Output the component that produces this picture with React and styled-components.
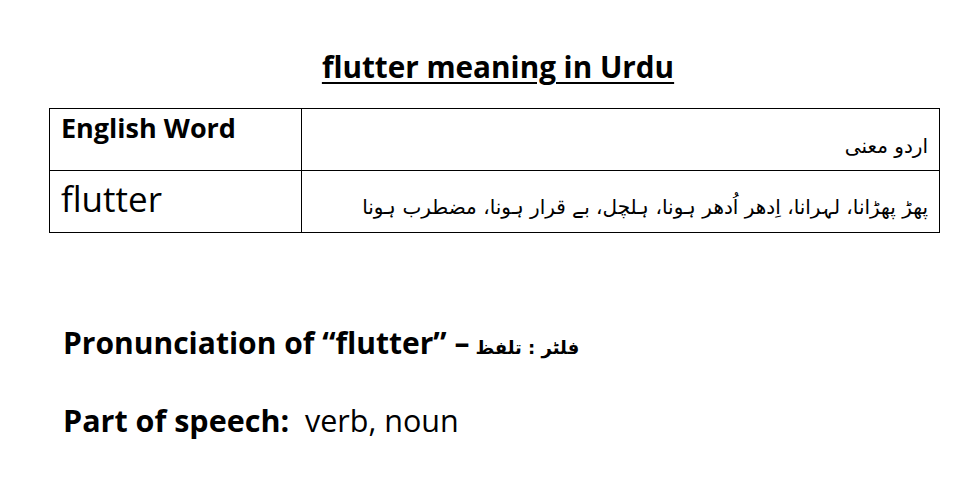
import React from "react";
import styled, { createGlobalStyle } from "styled-components";

const Global = createGlobalStyle`
  html, body { margin: 0; padding: 0; background: #fff; }
  body { font-family: "Open Sans", "Liberation Sans", sans-serif; color: #000; }
`;

const Page = styled.div`
  width: 980px;
  height: 488px;
  box-sizing: border-box;
  padding: 47px 40px 0 49px;
  display: flex;
  flex-direction: column;
`;

const Title = styled.h1`
  margin: 0 0 22px 0;
  text-align: center;
  font-size: 29.7px;
  font-weight: 700;
  line-height: 39px;
  text-decoration: underline;
  text-underline-offset: 4px;
  text-decoration-thickness: 2px;
  padding-left: 7px;
`;

const Table = styled.div`
  display: grid;
  grid-template-columns: 252px 1fr;
  border: 1px solid #000;
  width: 891px;
  box-sizing: border-box;
`;

const Cell = styled.div`
  height: ${(p) => (p.$last ? "61px" : "62px")};
  box-sizing: border-box;
  border-right: ${(p) => (p.$left ? "1px solid #000" : "none")};
  border-bottom: ${(p) => (p.$last ? "none" : "1px solid #000")};
  display: flex;
  justify-content: flex-start;
  padding: 0 11px;
  font-size: ${(p) => p.$size || 24}px;
  font-weight: ${(p) => (p.$bold ? 700 : 400)};
  align-items: ${(p) => p.$align || "flex-start"};
  direction: ${(p) => (p.$rtl ? "rtl" : "ltr")};
  font-family: ${(p) =>
    p.$rtl ? '"DejaVu Sans", "Noto Sans", sans-serif' : '"Open Sans", "Liberation Sans", sans-serif'};
`;

const CellText = styled.span`
  display: block;
  margin-top: ${(p) => p.$top || 0}px;
`;

const Info = styled.div`
  display: flex;
  flex-direction: column;
  gap: 30px;
  margin-top: 89px;
  padding-left: 14px;
`;

const Line = styled.div`
  font-size: ${(p) => p.$size || 30}px;
  line-height: 42px;
  display: flex;
  align-items: baseline;
  white-space: pre;
`;

const Strong = styled.span`
  font-weight: 700;
`;

const Urdu = styled.span`
  font-family: "DejaVu Sans", sans-serif;
  font-size: 18px;
  font-weight: 700;
  direction: rtl;
  unicode-bidi: isolate;
  margin-left: 6px;
`;

export default function App() {
  return (
    <>
      <Global />
      <Page>
        <Title>flutter meaning in Urdu</Title>
        <Table>
          <Cell $left $bold $size={27}>
            <CellText $top={0}>English Word</CellText>
          </Cell>
          <Cell $rtl $size={20} $align="center">
            <CellText $top={12}>اردو معنی</CellText>
          </Cell>
          <Cell $left $last $size={35} $align="center">
            <CellText $top={-6}>flutter</CellText>
          </Cell>
          <Cell $rtl $last $size={20} $align="center">
            <CellText $top={10}>
              پھڑ پھڑانا، لہرانا، اِدھر اُدھر ہونا، ہلچل، بے قرار ہونا، مضطرب ہونا
            </CellText>
          </Cell>
        </Table>
        <Info>
          <Line $size={30}>
            <Strong>Pronunciation of “flutter” –</Strong>
            <Urdu>فلٹر : تلفظ</Urdu>
          </Line>
          <Line $size={30.5}>
            <Strong>Part of speech:</Strong>
            {"  verb, noun"}
          </Line>
        </Info>
      </Page>
    </>
  );
}
